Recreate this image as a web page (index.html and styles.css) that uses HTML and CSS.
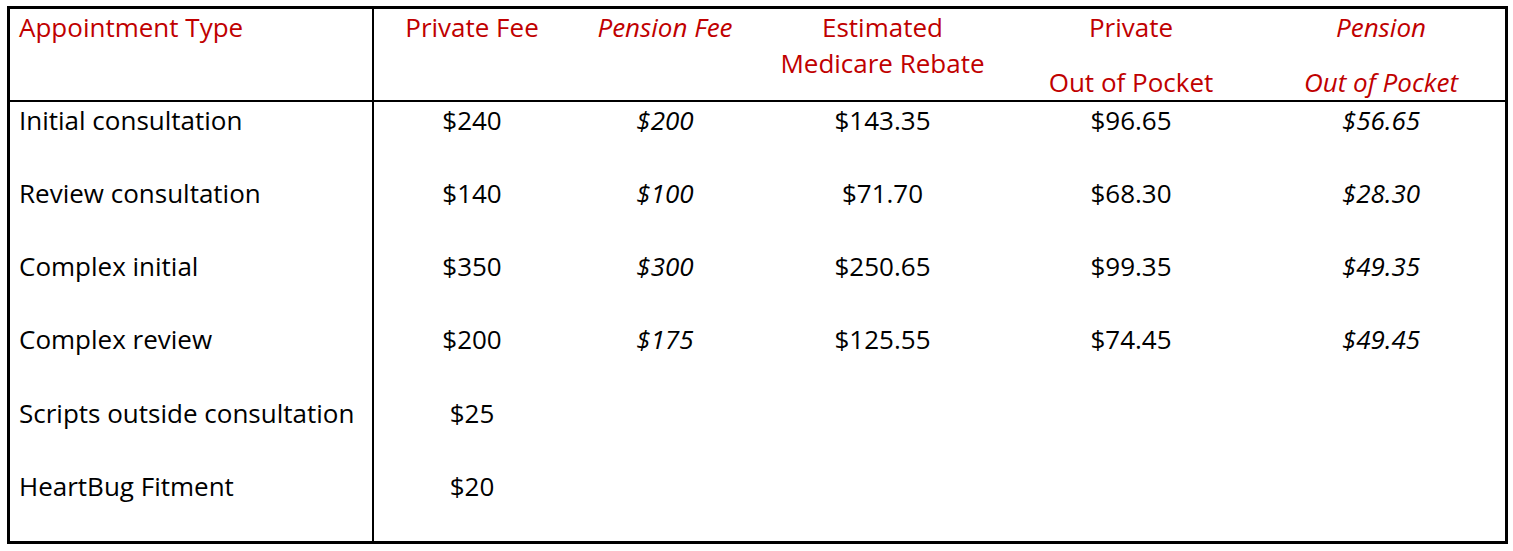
FILE: index.html
```html
<!DOCTYPE html>
<html lang="en">
<head>
<meta charset="utf-8">
<title>Fees</title>
<link rel="stylesheet" href="styles.css">
</head>
<body>
<div class="page">
  <div class="fees">
    <div class="cell first head"><span class="red">Appointment Type</span></div>
    <div class="cell head c"><span class="red">Private Fee</span></div>
    <div class="cell head c"><span class="red it">Pension Fee</span></div>
    <div class="cell head c"><span class="red line">Estimated</span><span class="red line l2">Medicare Rebate</span></div>
    <div class="cell head c"><span class="red line">Private</span><span class="red line l3">Out of Pocket</span></div>
    <div class="cell head c"><span class="red it line">Pension</span><span class="red it line l3">Out of Pocket</span></div>

    <div class="cell first">Initial consultation</div>
    <div class="cell c">$240</div>
    <div class="cell c it">$200</div>
    <div class="cell c">$143.35</div>
    <div class="cell c">$96.65</div>
    <div class="cell c it">$56.65</div>

    <div class="cell first">Review consultation</div>
    <div class="cell c">$140</div>
    <div class="cell c it">$100</div>
    <div class="cell c">$71.70</div>
    <div class="cell c">$68.30</div>
    <div class="cell c it">$28.30</div>

    <div class="cell first">Complex initial</div>
    <div class="cell c">$350</div>
    <div class="cell c it">$300</div>
    <div class="cell c">$250.65</div>
    <div class="cell c">$99.35</div>
    <div class="cell c it">$49.35</div>

    <div class="cell first">Complex review</div>
    <div class="cell c">$200</div>
    <div class="cell c it">$175</div>
    <div class="cell c">$125.55</div>
    <div class="cell c">$74.45</div>
    <div class="cell c it">$49.45</div>

    <div class="cell first">Scripts outside consultation</div>
    <div class="cell c">$25</div>
    <div class="cell c"></div>
    <div class="cell c"></div>
    <div class="cell c"></div>
    <div class="cell c"></div>

    <div class="cell first">HeartBug Fitment</div>
    <div class="cell c">$20</div>
    <div class="cell c"></div>
    <div class="cell c"></div>
    <div class="cell c"></div>
    <div class="cell c"></div>
  </div>
</div>
</body>
</html>
```
FILE: styles.css
```css
html, body {
  margin: 0;
  padding: 0;
  background: #ffffff;
}
.page {
  padding: 6px 0 0 7px;
}
.fees {
  box-sizing: border-box;
  width: 1501px;
  height: 538px;
  border: 3px solid #000;
  display: grid;
  grid-template-columns: 364px 196px 190px 245px 252px 248px;
  grid-template-rows: 93px repeat(6, 1fr);
  font-family: "Open Sans", Lato, "Liberation Sans", sans-serif;
  font-size: 26px;
  color: #000;
}
.cell {
  box-sizing: border-box;
  padding-top: 3px;
  line-height: 30px;
  white-space: nowrap;
}
.first {
  border-right: 2px solid #000;
  padding-left: 9px;
}
.head {
  border-bottom: 2px solid #000;
}
.c {
  text-align: center;
}
.it {
  font-style: italic;
}
.red {
  color: #c00000;
}
.line {
  display: block;
}
.l2 {
  margin-top: 6px;
}
.l3 {
  margin-top: 25px;
}
```
